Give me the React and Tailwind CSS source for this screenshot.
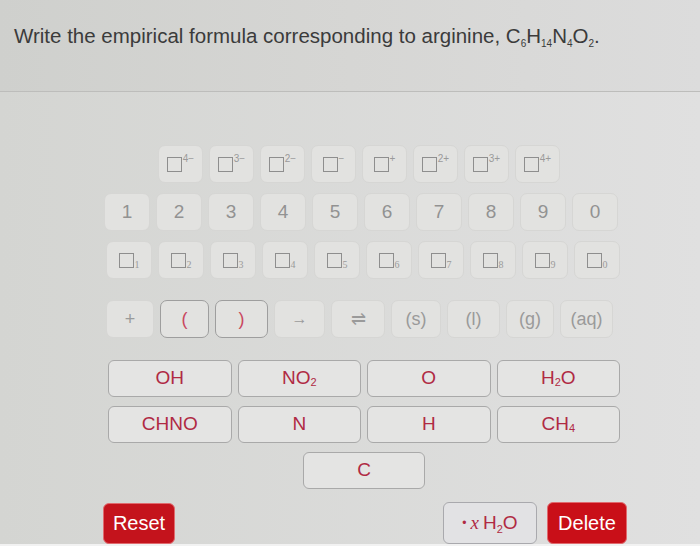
import React from "react";

const charges = ["4-", "3-", "2-", "-", "+", "2+", "3+", "4+"];
const digits = ["1", "2", "3", "4", "5", "6", "7", "8", "9", "0"];
const subs = ["1", "2", "3", "4", "5", "6", "7", "8", "9", "0"];

const Box = () => (
    <span className="inline-block w-[15px] h-[15px] border border-[#8e8e8e]" />
);

const keyBase =
    "h-[38px] rounded-[7px] bg-[#e2e2e0] border flex items-center justify-center";
const keyCls = keyBase + " border-[#d6d6d4]";
const keyDark = keyBase + " border-[#9e9e9e]";

const Formula = ({ children, className = "" }) => (
    <div
        className={
            "h-[37px] rounded-[6px] bg-[#e4e4e3] border border-[#a9a9a9] flex items-center justify-center text-[19px] text-[#b02a43] " +
            className
        }
    >
        {children}
    </div>
);

const Sub = ({ children, size = "text-[11px]" }) => (
    <span className={size + " relative top-[4px] leading-none"}>{children}</span>
);

const App = () => {
    return (
        <div
            className="w-[700px] h-[546px] overflow-hidden flex flex-col bg-gradient-to-r from-[#cfd0cd] via-[#d6d6d4] to-[#dcdcdc]"
            style={{ fontFamily: '"Liberation Sans", Arial, sans-serif' }}
        >
            {/* Question */}
            <div className="h-[92px] shrink-0 border-b border-[#bdbdbb] px-[14px] pt-[22px]">
                <p className="text-[20.5px] leading-[28px] text-[#3b3b3b]">
                    Write the empirical formula corresponding to arginine, C
                    <Sub size="text-[10px]">6</Sub>H<Sub size="text-[10px]">14</Sub>N
                    <Sub size="text-[10px]">4</Sub>O<Sub size="text-[10px]">2</Sub>.
                </p>
            </div>

            <div className="flex-1 flex flex-col bg-gradient-to-r from-[#d4d5d2] to-[#e0e0e0]">
                {/* charges */}
                <div className="flex gap-[6px] ml-[158px] mt-[53px] shrink-0">
                    {charges.map((c) => (
                        <div key={c} className={keyCls + " w-[45px] gap-[1px]"}>
                            <Box />
                            <span className="text-[10px] text-[#9a9a9a] relative -top-[6px]">
                                {c.replace("-", "−")}
                            </span>
                        </div>
                    ))}
                </div>

                {/* digits */}
                <div className="flex gap-[6px] ml-[104px] mt-[10px] shrink-0">
                    {digits.map((d) => (
                        <div key={d} className={keyCls + " w-[46px] text-[19px] text-[#929292]"}>
                            {d}
                        </div>
                    ))}
                </div>

                {/* subscripts */}
                <div className="flex gap-[6px] ml-[106px] mt-[10px] shrink-0">
                    {subs.map((d) => (
                        <div key={d} className={keyCls + " w-[46px] gap-[1px]"}>
                            <Box />
                            <span
                                className="text-[10px] text-[#9a9a9a] relative top-[4px]"
                                style={{ fontFamily: '"Liberation Serif", serif' }}
                            >
                                {d}
                            </span>
                        </div>
                    ))}
                </div>

                {/* symbols */}
                <div className="flex gap-[6px] ml-[106px] mt-[21px] shrink-0 text-[18px] text-[#9a9a9a]">
                    <div className={keyCls + " w-[48px] h-[34px]"}>+</div>
                    <div className={keyDark + " w-[49px] h-[34px] text-[#c9485f]"}>(</div>
                    <div className={keyDark + " w-[53px] h-[34px] text-[#c9485f]"}>)</div>
                    <div className={keyCls + " w-[51px] h-[34px] text-[16px]"}>→</div>
                    <div className={keyCls + " w-[54px] h-[34px]"}>⇌</div>
                    <div className={keyCls + " w-[50px] h-[34px]"}>(s)</div>
                    <div className={keyCls + " w-[53px] h-[34px]"}>(l)</div>
                    <div className={keyCls + " w-[48px] h-[34px]"}>(g)</div>
                    <div className={keyCls + " w-[53px] h-[34px]"}>(aq)</div>
                </div>

                {/* formulas */}
                <div className="ml-[108px] w-[512px] mt-[22px] shrink-0 grid grid-cols-4 gap-x-[6px] gap-y-[9px]">
                    <Formula>OH</Formula>
                    <Formula>
                        NO<Sub>2</Sub>
                    </Formula>
                    <Formula>O</Formula>
                    <Formula>
                        H<Sub>2</Sub>O
                    </Formula>
                    <Formula>CHNO</Formula>
                    <Formula>N</Formula>
                    <Formula>H</Formula>
                    <Formula>
                        CH<Sub>4</Sub>
                    </Formula>
                    <Formula className="col-start-2 col-span-2 w-[122px] justify-self-center">
                        C
                    </Formula>
                </div>

                {/* actions */}
                <div className="flex items-center ml-[103px] w-[524px] mt-[13px] shrink-0">
                    <button className="h-[41px] w-[72px] rounded-[6px] bg-[#c4131c] border border-[#e06a6e] text-white text-[20px]">
                        Reset
                    </button>
                    <div className="flex-1" />
                    <div className="h-[42px] w-[94px] rounded-[6px] bg-[#e2e2e4] border border-[#a9a9ad] flex items-center justify-center text-[19px] text-[#b02a43] gap-[4px]">
                        <span className="text-[12px]">•</span>
                        <span className="italic" style={{ fontFamily: '"Liberation Serif", serif' }}>
                            x
                        </span>
                        <span>
                            H<Sub>2</Sub>O
                        </span>
                    </div>
                    <button className="ml-[10px] h-[42px] w-[80px] rounded-[6px] bg-[#c90f18] border border-[#e06a6e] text-white text-[20px]">
                        Delete
                    </button>
                </div>
                <div className="mt-auto h-[5px] bg-[#f2f2f2]" />
            </div>
        </div>
    );
};

export default App;
